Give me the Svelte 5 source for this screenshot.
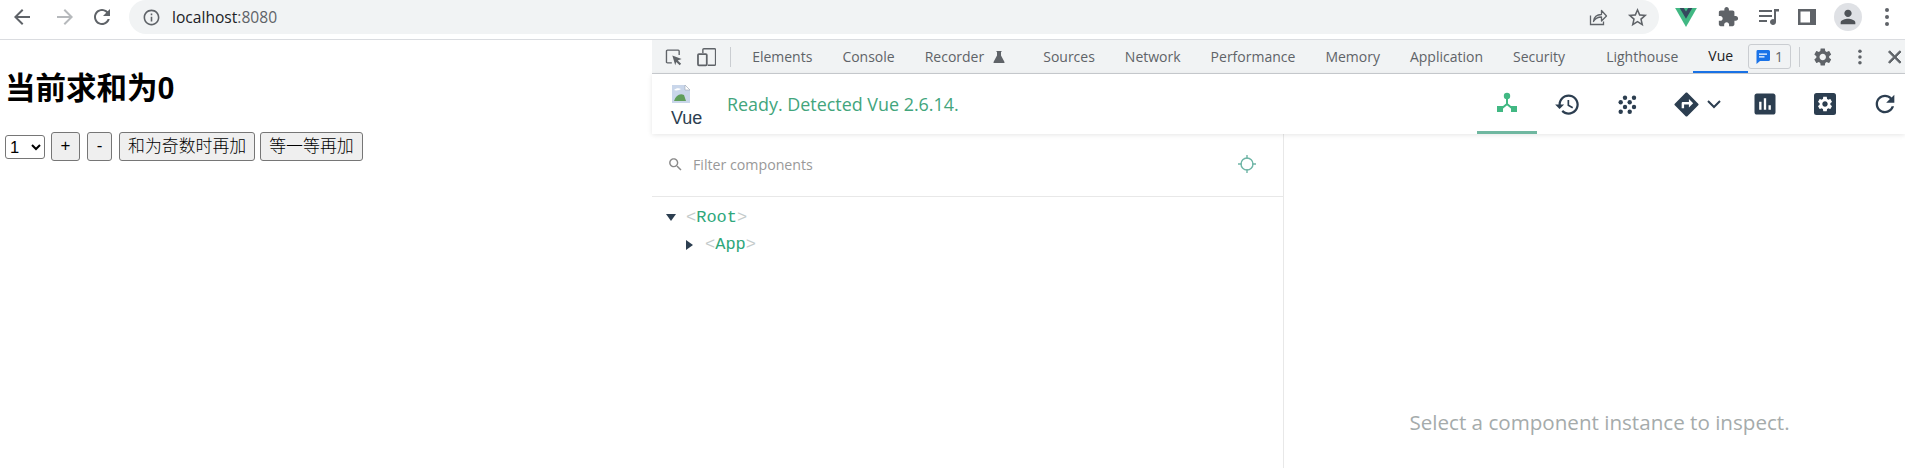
<script>
	const paths = {
		back: 'M20 11H7.83l5.59-5.59L12 4l-8 8 8 8 1.41-1.41L7.83 13H20v-2z',
		forward: 'M12 4l-1.41 1.41L16.17 11H4v2h12.17l-5.58 5.59L12 20l8-8z',
		refresh:
			'M17.65 6.35C16.2 4.9 14.21 4 12 4c-4.42 0-7.99 3.58-7.99 8s3.57 8 7.99 8c3.73 0 6.84-2.55 7.73-6h-2.08c-.82 2.33-3.04 4-5.65 4-3.31 0-6-2.69-6-6s2.69-6 6-6c1.66 0 3.14.69 4.22 1.78L13 11h7V4l-2.35 2.35z',
		info: 'M11 7h2v2h-2zm0 4h2v6h-2zm1-9C6.48 2 2 6.48 2 12s4.48 10 10 10 10-4.48 10-10S17.52 2 12 2zm0 18c-4.41 0-8-3.59-8-8s3.59-8 8-8 8 3.59 8 8-3.59 8-8 8z',
		star: 'M22 9.24l-7.19-.62L12 2 9.19 8.63 2 9.24l5.46 4.73L5.82 21 12 17.27 18.18 21l-1.63-7.03L22 9.24zM12 15.4l-3.76 2.27 1-4.28-3.32-2.88 4.38-.38L12 6.1l1.71 4.04 4.38.38-3.32 2.88 1 4.28L12 15.4z',
		puzzle:
			'M20.5 11H19V7c0-1.1-.9-2-2-2h-4V3.5C13 2.12 11.88 1 10.5 1S8 2.12 8 3.5V5H4c-1.1 0-1.99.9-1.99 2v3.8H3.5c1.49 0 2.7 1.21 2.7 2.7s-1.21 2.7-2.7 2.7H2V20c0 1.1.9 2 2 2h3.8v-1.5c0-1.49 1.21-2.7 2.7-2.7 1.49 0 2.7 1.21 2.7 2.7V22H17c1.1 0 2-.9 2-2v-4h1.5c1.38 0 2.5-1.12 2.5-2.5S21.88 11 20.5 11z',
		gear: 'M19.14 12.94c.04-.3.06-.61.06-.94 0-.32-.02-.64-.07-.94l2.03-1.58c.18-.14.23-.41.12-.61l-1.92-3.32c-.12-.22-.37-.29-.59-.22l-2.39.96c-.5-.38-1.03-.7-1.62-.94l-.36-2.54c-.04-.24-.24-.41-.48-.41h-3.84c-.24 0-.43.17-.47.41l-.36 2.54c-.59.24-1.13.57-1.62.94l-2.39-.96c-.22-.08-.47 0-.59.22L2.74 8.87c-.12.21-.08.47.12.61l2.03 1.58c-.05.3-.09.63-.09.94s.02.64.07.94l-2.03 1.58c-.18.14-.23.41-.12.61l1.92 3.32c.12.22.37.29.59.22l2.39-.96c.5.38 1.03.7 1.62.94l.36 2.54c.05.24.24.41.48.41h3.84c.24 0 .44-.17.47-.41l.36-2.54c.59-.24 1.13-.56 1.62-.94l2.39.96c.22.08.47 0 .59-.22l1.92-3.32c.12-.22.07-.47-.12-.61l-2.01-1.58zM12 15.6c-1.98 0-3.6-1.62-3.6-3.6s1.62-3.6 3.6-3.6 3.6 1.62 3.6 3.6-1.62 3.6-3.6 3.6z',
		history:
			'M13 3c-4.97 0-9 4.03-9 9H1l3.89 3.89.07.14L9 12H6c0-3.87 3.13-7 7-7s7 3.13 7 7-3.13 7-7 7c-1.93 0-3.68-.79-4.94-2.06l-1.42 1.42C8.27 19.99 10.51 21 13 21c4.97 0 9-4.03 9-9s-4.03-9-9-9zm-1 5v5l4.28 2.54.72-1.21-3.5-2.08V8H12z',
		directions:
			'M21.71 11.29l-9-9c-.39-.39-1.02-.39-1.41 0l-9 9c-.39.39-.39 1.02 0 1.41l9 9c.39.39 1.02.39 1.41 0l9-9c.39-.38.39-1.01 0-1.41zM14 14.5V12h-4v3H8v-4c0-.55.45-1 1-1h5V7.5l3.5 3.5-3.5 3.5z',
		chart:
			'M19 3H5c-1.1 0-2 .9-2 2v14c0 1.1.9 2 2 2h14c1.1 0 2-.9 2-2V5c0-1.1-.9-2-2-2zM9 17H7v-7h2v7zm4 0h-2V7h2v10zm4 0h-2v-4h2v4z',
		search:
			'M15.5 14h-.79l-.28-.27C15.41 12.59 16 11.11 16 9.5 16 5.91 13.09 3 9.5 3S3 5.91 3 9.5 5.91 16 9.5 16c1.61 0 3.09-.59 4.23-1.57l.27.28v.79l5 4.99L20.49 19l-4.99-5zm-6 0C7.01 14 5 11.99 5 9.5S7.01 5 9.5 5 14 7.01 14 9.5 11.99 14 9.5 14z',
		person:
			'M12 12c2.21 0 4-1.79 4-4s-1.79-4-4-4-4 1.79-4 4 1.79 4 4 4zm0 2c-2.67 0-8 1.34-8 4v2h16v-2c0-2.66-5.33-4-8-4z',
		close:
			'M19 6.41L17.59 5 12 10.59 6.41 5 5 6.41 10.59 12 5 17.59 6.41 19 12 13.41 17.59 19 19 17.59 13.41 12z'
	};

	const tabs = [
		'Elements',
		'Console',
		'Recorder',
		'Sources',
		'Network',
		'Performance',
		'Memory',
		'Application',
		'Security',
		'Lighthouse'
	];

	const timelineDots = [
		[7, 2.7],
		[16, 2.7],
		[2.7, 7.3],
		[11.7, 7.3],
		[7, 12],
		[16, 12],
		[2.7, 16.7],
		[11.7, 16.7]
	];
</script>

<div class="window">
	<header class="chrome">
		<button class="nav"><svg viewBox="0 0 24 24" width="24" height="24"><path d={paths.back} /></svg></button>
		<button class="nav off"><svg viewBox="0 0 24 24" width="24" height="24"><path d={paths.forward} /></svg></button>
		<button class="nav"><svg viewBox="0 0 24 24" width="24" height="24"><path d={paths.refresh} /></svg></button>
		<div class="omnibox">
			<svg viewBox="0 0 24 24" width="19" height="19"><path d={paths.info} /></svg>
			<span class="url">localhost<span class="port">:8080</span></span>
			<div class="spacer"></div>
			<svg class="share" viewBox="0 0 20 20" width="20" height="20">
				<path d="M2.500 8.500v9h13v-3" fill="none" stroke="#5f6368" stroke-width="1.3" />
				<path d="M5.500 14.500c.5-4.500 3.500-7 8-7V3.500l5 5.500-5 5v-4c-3.500 0-6 1-8 4.500z" fill="none" stroke="#5f6368" stroke-width="1.3" stroke-linejoin="round" />
			</svg>
			<svg viewBox="0 0 24 24" width="23" height="23"><path d={paths.star} /></svg>
		</div>
		<div class="extensions">
			<svg viewBox="0 0 24 21" width="22" height="19">
				<path d="M0 0h24L12 21z" fill="#41b883" />
				<path d="M5 0h4.500L12 4l2.500-4H19L12 12z" fill="#35495e" />
			</svg>
			<svg viewBox="0 0 24 24" width="22" height="22"><path d={paths.puzzle} /></svg>
			<svg viewBox="0 0 22 22" width="22" height="22">
				<path d="M1 4h13v2H1zM1 9h13v2H1zM1 14h8v2H1zM16 3h5v2.500h-3V16a3 3 0 1 1-2-2.800z" />
			</svg>
			<svg viewBox="0 0 20 20" width="20" height="20">
				<path d="M1 2h18v16H1zm2.500 2.500v11H13v-11z" />
			</svg>
			<div class="avatar"><svg viewBox="0 0 24 24" width="22" height="22"><path d={paths.person} /></svg></div>
			<svg viewBox="0 0 4 18" width="4" height="18" class="dots">
				<circle cx="2" cy="2" r="2" /><circle cx="2" cy="9" r="2" /><circle cx="2" cy="16" r="2" />
			</svg>
		</div>
	</header>

	<div class="body">
		<main class="page">
			<h1>当前求和为0</h1>
			<div class="controls">
				<select>
					<option>1</option>
				</select>
				<button class="plain small">+</button>
				<button class="plain small minus">-</button>
				<button class="plain">和为奇数时再加</button>
				<button class="plain">等一等再加</button>
			</div>
		</main>

		<section class="devtools">
			<nav class="tabbar">
				<svg class="tool" viewBox="0 0 18 18" width="18" height="18">
					<path d="M7 15H2.500a1 1 0 0 1-1-1V3a1 1 0 0 1 1-1h11a1 1 0 0 1 1 1v4" fill="none" stroke="#5f6368" stroke-width="1.400" />
					<path d="M7.500 7.500l9.500 3.500-4 1.500 3.500 3.500-1.500 1.500-3.500-3.500-1 3.500z" fill="#5f6368" />
				</svg>
				<svg class="tool" viewBox="0 0 20 20" width="20" height="20">
					<path d="M6 6V2.500a1 1 0 0 1 1-1h11a1 1 0 0 1 1 1v15a1 1 0 0 1-1 1h-7" fill="none" stroke="#5f6368" stroke-width="1.400" />
					<rect x="1" y="7" width="9" height="11.500" rx="1" fill="none" stroke="#5f6368" stroke-width="1.800" />
				</svg>
				<div class="sep"></div>
				{#each tabs as tab}
					<div class="tab" class:security={tab === 'Security'}>
						{tab}
						{#if tab === 'Recorder'}
							<svg class="flask" viewBox="0 0 12 12" width="12" height="12">
								<path d="M3.500 0h5v1H8v3.500L11.500 11a.7.7 0 0 1-.6 1H1.100a.7.7 0 0 1-.6-1L4 4.500V1h-.5z" />
							</svg>
						{/if}
					</div>
				{/each}
				<div class="tab active">Vue</div>
				<div class="issues">
					<svg viewBox="0 0 14 14" width="14" height="14">
						<path d="M1.500 0h11A1.500 1.500 0 0 1 14 1.500v8a1.500 1.500 0 0 1-1.500 1.500H4l-3.500 3V1.500A1.500 1.500 0 0 1 1.500 0z" fill="#1a73e8" />
						<path d="M3 3.500h8v1.200H3zM3 6.300h5.500v1.200H3z" fill="#fff" />
					</svg>
					<span>1</span>
				</div>
				<div class="sep narrow"></div>
				<svg class="end gear" viewBox="0 0 24 24" width="22" height="22"><path d={paths.gear} /></svg>
				<svg class="end more" viewBox="0 0 4 16" width="4" height="16">
					<circle cx="2" cy="2" r="1.800" /><circle cx="2" cy="8" r="1.800" /><circle cx="2" cy="14" r="1.800" />
				</svg>
				<svg class="end x" viewBox="0 0 24 24" width="22" height="22"><path d={paths.close} /></svg>
			</nav>

			<div class="vuebar">
				<div class="logo">
					<svg viewBox="0 0 20 20" width="20" height="20">
						<path d="M1 1h13l5 5v13H1z" fill="#c9d6ea" />
						<path d="M14 1l5 5h-5z" fill="#fff" stroke="#9aa5b1" stroke-width=".6" />
						<path d="M3 17c2-6 6-8 10-6l2 6z" fill="#5f9e5b" />
						<path d="M3 6c2-2 5-2 7-1-1 1-5 2-7 1z" fill="#fff" />
					</svg>
					<span>Vue</span>
				</div>
				<span class="ready">Ready. Detected Vue 2.6.14.</span>
				<div class="spacer"></div>
				<div class="vuetab current">
					<svg viewBox="0 0 22 22" width="22" height="22" class="green">
						<circle cx="11" cy="4" r="3.200" />
						<rect x="1" y="14" width="6" height="6" />
						<rect x="15" y="14" width="6" height="6" />
						<path d="M11 6v6L5 17M11 12l6 5" fill="none" stroke="#41b883" stroke-width="2" />
					</svg>
				</div>
				<div class="vuetab"><svg viewBox="0 0 24 24" width="27" height="27"><path d={paths.history} /></svg></div>
				<div class="vuetab">
					<svg viewBox="0 0 19 19" width="19" height="19">
						{#each timelineDots as [cx, cy]}
							<circle {cx} {cy} r="2.200" />
						{/each}
					</svg>
				</div>
				<div class="vuetab wide">
					<svg viewBox="0 0 24 24" width="29" height="29"><path d={paths.directions} /></svg>
					<svg class="chev" viewBox="0 0 14 9" width="14" height="9">
						<path d="M1 1l6 6 6-6" fill="none" stroke="#2c3e50" stroke-width="2" />
					</svg>
				</div>
				<div class="vuetab"><svg viewBox="0 0 24 24" width="28" height="28"><path d={paths.chart} /></svg></div>
				<div class="vuetab">
					<svg viewBox="0 0 22 22" width="22" height="22">
						<rect width="22" height="22" rx="2.500" />
						<g transform="translate(2 2) scale(.75)"><path d={paths.gear} fill="#fff" /></g>
					</svg>
				</div>
				<div class="vuetab"><svg viewBox="0 0 24 24" width="28" height="28"><path d={paths.refresh} /></svg></div>
			</div>

			<div class="panes">
				<div class="tree">
					<div class="filter">
						<svg viewBox="0 0 24 24" width="17" height="17"><path d={paths.search} /></svg>
						<span>Filter components</span>
						<div class="spacer"></div>
						<svg class="target" viewBox="0 0 18 18" width="18" height="18">
							<circle cx="9" cy="9" r="6" fill="none" stroke="#6fb5a6" stroke-width="1.400" />
							<path d="M9 0v4M9 14v4M0 9h4M14 9h4" stroke="#6fb5a6" stroke-width="1.400" />
						</svg>
					</div>
					<div class="node root">
						<i class="caret down"></i>
						<span class="angle">&lt;</span><span class="name">Root</span><span class="angle">&gt;</span>
					</div>
					<div class="node child">
						<i class="caret"></i>
						<span class="angle">&lt;</span><span class="name">App</span><span class="angle">&gt;</span>
					</div>
				</div>
				<div class="inspector">Select a component instance to inspect.</div>
			</div>
		</section>
	</div>
</div>

<style>
	:global(body) {
		background: #fff;
		overflow: hidden;
	}

	.window {
		width: 1905px;
		height: 468px;
		display: flex;
		flex-direction: column;
		font-family: 'Open Sans', sans-serif;
	}

	.spacer {
		flex: 1;
	}

	.chrome {
		height: 39px;
		flex: none;
		display: flex;
		align-items: flex-start;
		border-bottom: 1px solid #dadce0;
		box-sizing: content-box;
	}

	.nav {
		width: 24px;
		height: 24px;
		padding: 0;
		margin: 5px 0 0 10px;
		border: none;
		background: none;
		fill: #5f6368;
	}

	.nav:nth-child(2) {
		margin-left: 19px;
	}

	.nav:nth-child(3) {
		margin-left: 13px;
	}

	.nav.off {
		fill: #b6b9bc;
	}

	.omnibox {
		width: 1530px;
		height: 34px;
		margin-left: 15px;
		padding: 0 10px 0 13px;
		box-sizing: border-box;
		display: flex;
		align-items: center;
		background: #f1f3f4;
		border-radius: 17px;
		fill: #5f6368;
	}

	.url {
		margin-left: 11px;
		font-size: 15.600px;
		color: #202124;
	}

	.port {
		color: #5f6368;
	}

	.share {
		margin-right: 18px;
	}

	.extensions {
		display: flex;
		align-items: center;
		height: 34px;
		margin-left: 16px;
		fill: #5f6368;
	}

	.extensions > svg:nth-child(2) {
		margin-left: 20px;
	}

	.extensions > svg:nth-child(3) {
		margin-left: 19px;
	}

	.extensions > svg:nth-child(4) {
		margin-left: 17px;
	}

	.avatar {
		width: 28px;
		height: 28px;
		margin-left: 17px;
		border-radius: 50%;
		background: #dfe1e5;
		display: flex;
		align-items: center;
		justify-content: center;
		fill: #4f5358;
	}

	.dots {
		margin-left: 23px;
	}

	.body {
		flex: 1;
		display: flex;
		min-height: 0;
	}

	.page {
		width: 652px;
		flex: none;
		padding: 0 0 0 5px;
		box-sizing: border-box;
		font-family: 'Liberation Sans', 'Noto Sans CJK SC', sans-serif;
	}

	h1 {
		margin: 30px 0 0;
		font-size: 30.500px;
		line-height: 36px;
		font-weight: bold;
		color: #000;
	}

	.controls {
		display: flex;
		align-items: center;
		margin: 26px 0 0;
	}

	select {
		width: 40px;
		height: 24px;
		margin-right: 6px;
		padding: 0;
		font: 16.5px 'Liberation Sans', sans-serif;
		background: #fff;
		border: 1px solid #767676;
		border-radius: 3px;
		color: #000;
	}

	.plain {
		height: 29px;
		margin-right: 5px;
		padding: 1px 8px 0;
		font-family: inherit;
		font-size: 16.900px;
		font-weight: 300;
		line-height: 1;
		color: #000;
		background: #efefef;
		border: 1px solid #767676;
		border-radius: 3px;
	}

	.small {
		width: 29px;
		padding: 0;
		margin-right: 7px;
	}

	.minus {
		width: 25px;
	}

	.devtools {
		flex: 1;
		min-width: 0;
		display: flex;
		flex-direction: column;
	}

	.tabbar {
		height: 34px;
		flex: none;
		display: flex;
		align-items: center;
		background: #f1f3f4;
		border-bottom: 1px solid #cacdd1;
		box-sizing: border-box;
		font-size: 14px;
		color: #5f6368;
		fill: #5f6368;
	}

	.tool {
		margin-left: 13px;
	}

	.tool + .tool {
		margin-left: 14px;
	}

	.sep {
		width: 1px;
		height: 20px;
		margin: 0 6px 0 14px;
		background: #cacdd1;
	}

	.tab {
		height: 33px;
		padding: 0 15px;
		display: flex;
		align-items: center;
		white-space: nowrap;
		box-sizing: border-box;
	}

	.flask {
		margin-left: 9px;
		margin-right: 8px;
	}

	.security {
		padding-right: 26px;
	}

	.active {
		color: #202124;
		border-bottom: 2px solid #1a73e8;
	}

	.issues {
		width: 44px;
		height: 25px;
		display: flex;
		align-items: center;
		justify-content: center;
		gap: 5px;
		box-sizing: border-box;
		border: 1px solid #cacdd1;
		border-radius: 3px;
	}

	.sep.narrow {
		margin: 0 12px 0 8px;
	}

	.more {
		margin-left: 24px;
	}

	.x {
		margin-left: 22px;
		stroke: #5f6368;
		stroke-width: 1;
	}

	.vuebar {
		height: 60px;
		flex: none;
		display: flex;
		align-items: center;
		background: #fff;
		box-shadow: 0 1px 5px rgba(0, 0, 0, 0.1);
		position: relative;
		fill: #2c3e50;
	}

	.logo {
		margin-left: 19px;
		width: 36px;
		display: flex;
		flex-direction: column;
		gap: 4px;
		margin-top: 4px;
		font: 18px/20px 'Liberation Sans', sans-serif;
		color: #2c3e50;
	}

	.ready {
		margin-left: 20px;
		font-size: 17.900px;
		color: #42a57c;
	}

	.vuetab {
		width: 60px;
		height: 60px;
		display: flex;
		align-items: center;
		justify-content: center;
		box-sizing: border-box;
	}

	.wide {
		width: 78px;
		gap: 6px;
	}

	.current {
		border-bottom: 3px solid #6fb7a0;
	}

	.green {
		fill: #41b883;
	}

	.vuetab:last-child {
		margin-right: -10px;
	}

	.panes {
		flex: 1;
		display: flex;
		min-height: 0;
	}

	.tree {
		width: 632px;
		flex: none;
		border-right: 1px solid #e8e8e8;
		box-sizing: border-box;
	}

	.filter {
		height: 63px;
		padding: 0 27px 2px 15px;
		display: flex;
		align-items: center;
		gap: 9px;
		border-bottom: 1px solid #e8e8e8;
		box-sizing: border-box;
		font-size: 14.200px;
		color: #999;
		fill: #8a8a8a;
	}

	.node {
		height: 27px;
		display: flex;
		align-items: center;
		font: 17px 'Liberation Mono', monospace;
	}

	.root {
		margin-top: 7px;
		padding-left: 14px;
	}

	.child {
		padding-left: 34px;
	}

	.caret {
		width: 0;
		height: 0;
		margin-right: 12px;
		border-left: 7px solid #2c3e50;
		border-top: 5px solid transparent;
		border-bottom: 5px solid transparent;
	}

	.caret.down {
		margin-right: 10px;
		border-top: 7px solid #2c3e50;
		border-left: 5px solid transparent;
		border-right: 5px solid transparent;
		border-bottom: none;
	}

	.angle {
		color: #c4cbcb;
	}

	.name {
		color: #2fa77b;
	}

	.inspector {
		flex: 1;
		display: flex;
		align-items: flex-end;
		justify-content: center;
		padding: 0 0 32px 10px;
		font-size: 20.600px;
		color: #a5abab;
		white-space: nowrap;
	}
</style>
